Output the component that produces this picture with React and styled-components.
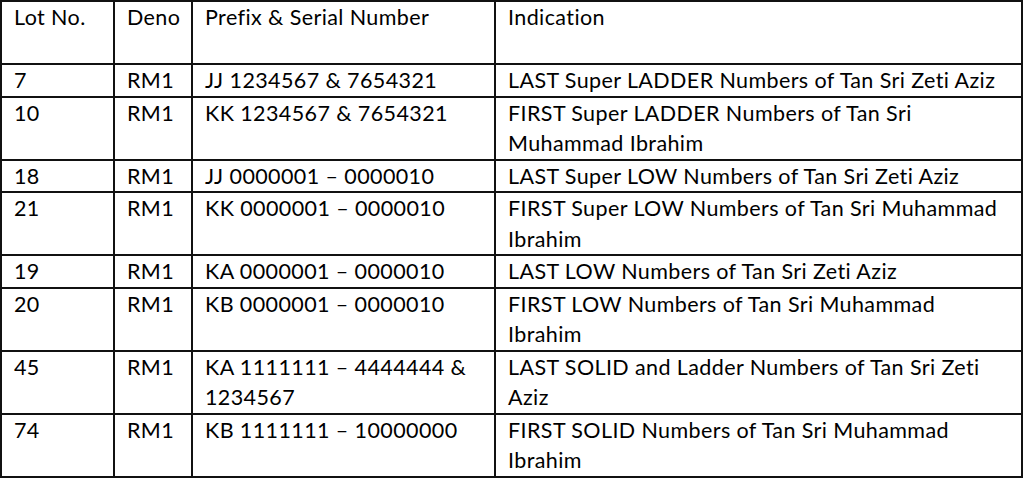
import styled, { createGlobalStyle } from "styled-components";

const GlobalStyle = createGlobalStyle`
  html, body {
    margin: 0;
    padding: 0;
    background: #fff;
  }
  body {
    font-family: Lato, "Open Sans", sans-serif;
    color: #000;
  }
`;

const rows = [
  { lot: "7", deno: "RM1", serial: ["JJ 1234567 & 7654321"], note: ["LAST Super LADDER Numbers of Tan Sri Zeti Aziz"] },
  { lot: "10", deno: "RM1", serial: ["KK 1234567 & 7654321"], note: ["FIRST Super LADDER Numbers of Tan Sri", "Muhammad Ibrahim"] },
  { lot: "18", deno: "RM1", serial: ["JJ 0000001 – 0000010"], note: ["LAST Super LOW Numbers of Tan Sri Zeti Aziz"] },
  { lot: "21", deno: "RM1", serial: ["KK 0000001 – 0000010"], note: ["FIRST Super LOW Numbers of Tan Sri Muhammad", "Ibrahim"] },
  { lot: "19", deno: "RM1", serial: ["KA 0000001 – 0000010"], note: ["LAST LOW Numbers of Tan Sri Zeti Aziz"] },
  { lot: "20", deno: "RM1", serial: ["KB 0000001 – 0000010"], note: ["FIRST LOW Numbers of Tan Sri Muhammad", "Ibrahim"] },
  { lot: "45", deno: "RM1", serial: ["KA 1111111 – 4444444 &", "1234567"], note: ["LAST SOLID and Ladder Numbers of Tan Sri Zeti", "Aziz"] },
  { lot: "74", deno: "RM1", serial: ["KB 1111111 – 10000000"], note: ["FIRST SOLID Numbers of Tan Sri Muhammad", "Ibrahim"] },
];

function Lines({ lines }) {
  return lines.map((line, i) => <Line key={i}>{line}</Line>);
}

export default function App() {
  return (
    <>
      <GlobalStyle />
      <Table>
        <colgroup>
          <col style={{ width: 113 }} />
          <col style={{ width: 78 }} />
          <col style={{ width: 303 }} />
          <col />
        </colgroup>
        <thead>
          <tr>
            <Head>Lot No.</Head>
            <Head>Deno</Head>
            <Head>Prefix &amp; Serial Number</Head>
            <Head>Indication</Head>
          </tr>
        </thead>
        <tbody>
          {rows.map((r) => (
            <tr key={r.lot}>
              <Cell>{r.lot}</Cell>
              <Cell>{r.deno}</Cell>
              <Cell><Lines lines={r.serial} /></Cell>
              <Cell><Lines lines={r.note} /></Cell>
            </tr>
          ))}
        </tbody>
      </Table>
    </>
  );
}

const Table = styled.table`
  width: 1023px;
  border-collapse: collapse;
  table-layout: fixed;
  font-size: 21.5px;
  line-height: 30.5px;
  letter-spacing: 0.4px;
  font-variant-ligatures: none;
`;

const Cell = styled.td`
  border: 2px solid #111;
  padding: 0 8px 0 12px;
  vertical-align: top;
  text-align: left;
  font-weight: 400;
`;

const Head = styled(Cell).attrs({ as: "th" })`
  height: 61px;
`;

const Line = styled.div`
  white-space: nowrap;
`;
